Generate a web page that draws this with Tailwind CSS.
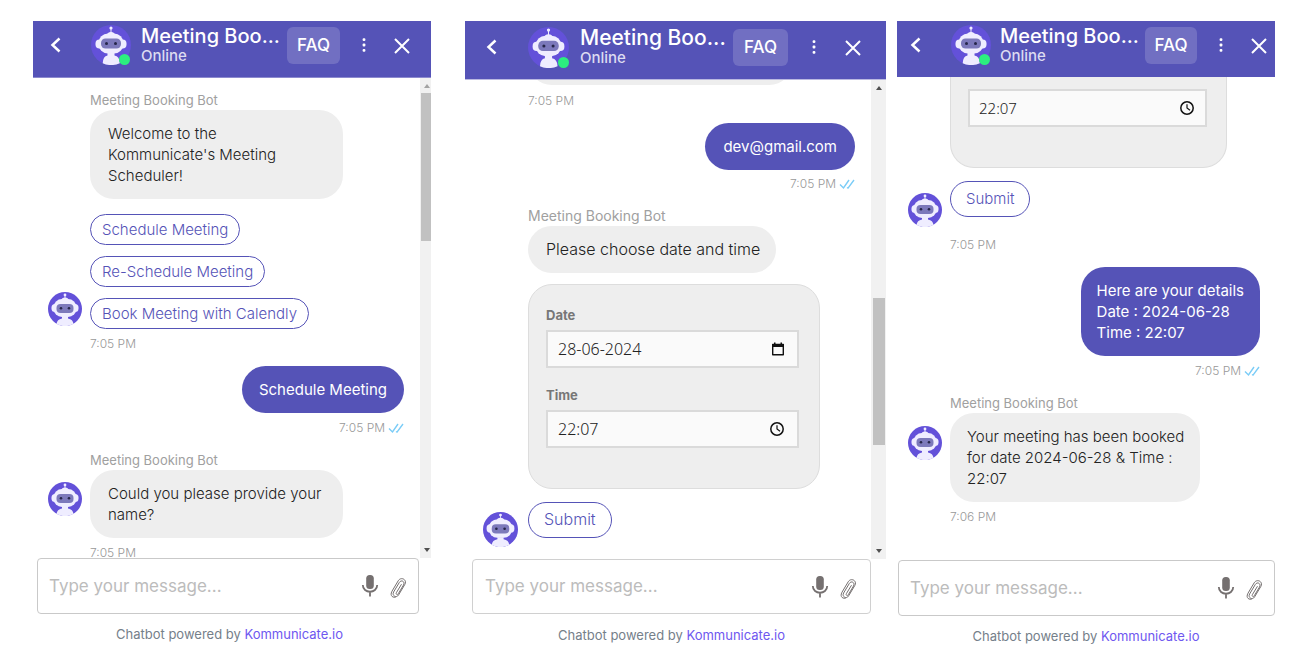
<!DOCTYPE html>
<html lang="en">
<head>
<meta charset="utf-8">
<meta name="viewport" content="width=device-width, initial-scale=1">
<title>Meeting Booking Bot</title>
<script src="https://cdn.jsdelivr.net/npm/@tailwindcss/browser@4"></script>
</head>
<body class="bg-white font-['Inter','Liberation_Sans',sans-serif] text-[15px] leading-[21px] font-light text-[#222222]">
<svg class="hidden" aria-hidden="true">
  <symbol id="bot" viewBox="0 0 40 40">
    <circle cx="20" cy="20" r="20" fill="#6351d9"/>
    <path d="M20 3v8" stroke="#efedff" stroke-width="1"/>
    <circle cx="20" cy="3" r="1.600" fill="#efedff"/>
    <path d="M16 10.500a4 3.500 0 0 1 8 0z" fill="#efedff"/>
    <rect x="4.500" y="14.500" width="31" height="9" rx="4" fill="#efedff"/>
    <rect x="7.500" y="8.500" width="25" height="20" rx="9.500" fill="#efedff"/>
    <rect x="10" y="13.500" width="20" height="10" rx="4.500" fill="#7c79bb"/>
    <circle cx="15.500" cy="18.500" r="1.500" fill="#26264a"/>
    <circle cx="24.500" cy="18.500" r="1.500" fill="#26264a"/>
    <path d="M16.500 28h7v2.500q5 .8 5.300 7.700Q20 42 11.700 38.200 12 31.300 16.500 30.500z" fill="#efedff"/>
  </symbol>
  <symbol id="botc" viewBox="0 0 34 34">
    <circle cx="17" cy="17" r="17" fill="#6351d9"/>
    <path d="M17 3v5" stroke="#efedff" stroke-width=".8"/>
    <circle cx="17" cy="3" r="1.400" fill="#efedff"/>
    <path d="M13.500 8a3.500 2.500 0 0 1 7 0z" fill="#efedff"/>
    <rect x="3.500" y="12" width="27" height="8" rx="3.500" fill="#efedff"/>
    <rect x="5.500" y="7" width="23" height="18" rx="8.500" fill="#efedff"/>
    <rect x="8.500" y="12" width="17" height="9" rx="4" fill="#7c79bb"/>
    <circle cx="13" cy="16.300" r="1.300" fill="#26264a"/>
    <circle cx="21" cy="16.300" r="1.300" fill="#26264a"/>
    <path d="M14 24.500h6v2q5 .8 5.500 5.500Q17 36.300 8.500 32q.5-4.700 5.500-5.500z" fill="#efedff"/>
  </symbol>
  <symbol id="back" viewBox="0 0 20 20"><path d="M13.500 3.500 6.500 10l7 6.500" fill="none" stroke="#fff" stroke-width="2.500"/></symbol>
  <symbol id="dots" viewBox="0 0 24 24"><g fill="#fff"><rect x="10.600" y="5.200" width="2.800" height="2.800" rx="1"/><rect x="10.600" y="10.600" width="2.800" height="2.800" rx="1"/><rect x="10.600" y="16" width="2.800" height="2.800" rx="1"/></g></symbol>
  <symbol id="close" viewBox="0 0 20 20"><path d="m3 3 14 14M17 3 3 17" stroke="#fff" stroke-width="2"/></symbol>
  <symbol id="ticks" viewBox="0 0 16 12"><path d="m1 6.500 3.500 3.500L10 2M8 9.500l1 .6L15 2" fill="none" stroke="#7accf7" stroke-width="1.400"/></symbol>
  <symbol id="mic" viewBox="0 0 18 24"><rect x="5.200" y="1" width="7.600" height="14" rx="3.500" fill="#757070"/><path d="M1.800 11c0 9 14.400 9 14.400 0M9 17.500V22.500" fill="none" stroke="#757070" stroke-width="1.800"/></symbol>
  <symbol id="clip" viewBox="0 0 18 20"><path d="M12.500 6.200 7.400 14.600c-1 1.600.9 2.700 1.900 1.100L14.500 7c1.900-3.400-2.200-5.800-4.200-2.500L4.600 14c-2 3.600 2.800 6.500 5 2.900L15.800 6.500c2.800-4.800-3.800-8.300-6.600-3.700L3 13.200c-2.700 5 1.500 7 4.200 5.600" fill="none" stroke="#757070" stroke-width="1"/></symbol>
  <symbol id="cal" viewBox="0 0 16 16"><path d="M2.700 3.500h10.600v10.300H2.700z" fill="none" stroke="#111" stroke-width="1.400" stroke-linejoin="round"/><path d="M2 3h12v3H2zM4 1.500h1.500V4H4zM10.500 1.500H12V4h-1.500z" fill="#111"/></symbol>
  <symbol id="clock" viewBox="0 0 16 16"><g fill="none" stroke="#111"><circle cx="8" cy="8" r="6.200" stroke-width="1.500"/><path d="M8 4.200V8l3 2.200" stroke-width="1.200"/></g></symbol>
</svg>

<div class="flex min-h-screen items-start pt-[21px] pr-[19px] pl-[33px]">

  <!-- First chat window -->
  <section class="mr-[34px] min-w-0 flex-[398_1_0%]">
    <header class="flex h-[57px] items-center border-b border-[#8c8ace] bg-[#5553b7] pr-[19px] pl-[13px] text-white">
      <button aria-label="Back" class="mr-[25px] -mt-2 shrink-0"><svg class="size-5"><use href="#back"/></svg></button>
      <div class="relative -mt-2 mr-2.5 shrink-0">
        <svg class="size-10"><use href="#bot"/></svg>
        <span class="absolute right-px bottom-0 size-[11px] rounded-full bg-[#2cee7f]"></span>
      </div>
      <div class="-mt-2 min-w-0 flex-1">
        <h2 class="text-[20px] leading-[22px] font-medium whitespace-nowrap">Meeting Boo...</h2>
        <p class="text-[15px] leading-[18px] font-medium text-[#dddcf1]">Online</p>
      </div>
      <button class="-mt-2 mr-3 h-[37px] w-[53px] shrink-0 rounded-md bg-[#716fc2] text-[17px] font-medium">FAQ</button>
      <button aria-label="Menu" class="-mt-2 mr-4 shrink-0"><svg class="size-6"><use href="#dots"/></svg></button>
      <button aria-label="Close" class="-mt-1.5 shrink-0"><svg class="size-5"><use href="#close"/></svg></button>
    </header>
    <div class="flex h-[480px]">
      <div class="flex min-w-0 flex-1 flex-col gap-3.5 overflow-hidden pt-3 pr-4 pl-[15px]">
        <article class="flex gap-2">
          <svg class="mb-[26px] size-[34px] shrink-0 self-end"><use href="#botc"/></svg>
          <div class="min-w-0 flex-1">
            <h3 class="text-[13px] leading-5 font-normal text-[#a0a0a0]">Meeting Booking Bot</h3>
            <p class="w-[253px] rounded-3xl bg-[#eeeeee] py-[13px] pr-10 pl-[18px]">Welcome to the Kommunicate's Meeting Scheduler!</p>
            <div class="mt-[15px] flex flex-col items-start gap-[11px] text-[#5553b7]">
              <button class="h-[31px] rounded-full border border-[#5553b7] px-[11px]">Schedule Meeting</button>
              <button class="h-[31px] rounded-full border border-[#5553b7] px-[11px]">Re-Schedule Meeting</button>
              <button class="h-[31px] rounded-full border border-[#5553b7] px-[11px]">Book Meeting with Calendly</button>
            </div>
            <time class="mt-[7px] block text-[12px] leading-4 text-[#999999]">7:05 PM</time>
          </div>
        </article>
        <article class="flex flex-col items-end">
          <p class="rounded-3xl bg-[#5553b7] px-[17px] py-[13px] font-normal text-white">Schedule Meeting</p>
          <div class="mt-[7px] flex items-center gap-[3px] text-[12px] leading-4 text-[#999999]"><time>7:05 PM</time><svg class="h-3 w-4"><use href="#ticks"/></svg></div>
        </article>
        <article class="flex gap-2">
          <svg class="mt-8 size-[34px] shrink-0"><use href="#botc"/></svg>
          <div class="min-w-0 flex-1">
            <h3 class="text-[13px] leading-5 font-normal text-[#a0a0a0]">Meeting Booking Bot</h3>
            <p class="w-[253px] rounded-3xl bg-[#eeeeee] py-[13px] pr-4 pl-[18px]">Could you please provide your name?</p>
            <time class="mt-[7px] block text-[12px] leading-4 text-[#999999]">7:05 PM</time>
          </div>
        </article>
      </div>
      <div aria-hidden="true" class="flex w-[11px] shrink-0 flex-col items-center bg-[#f1f1f1]">
        <svg class="h-[15px] w-[11px]" viewBox="0 0 11 15"><path d="m4 10 3-4 3 4z" fill="#a3a3a3"/></svg>
        <div class="h-[148px] w-full border-l border-[#f1f1f1] bg-[#c1c1c1]"></div>
        <svg class="mt-auto h-[15px] w-[11px]" viewBox="0 0 11 15"><path d="m4 5 3 4 3-4z" fill="#505050"/></svg>
      </div>
    </div>
    <form class="mr-3 ml-1 flex h-14 items-center rounded-[4px] border border-[#c9c9c9] bg-white pr-[11px] pl-[11px]">
      <input type="text" aria-label="Message" placeholder="Type your message..." class="min-w-0 flex-1 text-[17px] font-normal outline-none placeholder:text-[#bcbcbc]">
      <button type="button" aria-label="Record voice" class="mr-2.5"><svg class="h-6 w-[18px]"><use href="#mic"/></svg></button>
      <button type="button" aria-label="Attach file" class="mt-1"><svg class="h-5 w-[18px]"><use href="#clip"/></svg></button>
    </form>
    <footer class="mt-2.5 pr-[5px] text-center text-[13px] leading-5 font-normal text-[#75808a]">Chatbot powered by <a href="#" class="text-[#6e57f0]">Kommunicate.io</a></footer>
  </section>

  <!-- Second chat window -->
  <section class="mr-[11px] min-w-0 flex-[421_1_0%]">
    <header class="flex h-[59px] items-center border-b border-[#bab9e1] bg-[#5553b7] pr-[23px] pl-[17px] text-white">
      <button aria-label="Back" class="mr-[26px] -mt-1.5 shrink-0"><svg class="size-5"><use href="#back"/></svg></button>
      <div class="relative -mt-1.5 mr-[11px] shrink-0">
        <svg class="size-[41px]"><use href="#bot"/></svg>
        <span class="absolute right-0 bottom-0 size-[11px] rounded-full bg-[#2cee7f]"></span>
      </div>
      <div class="-mt-1.5 min-w-0 flex-1">
        <h2 class="text-[21px] leading-[22px] font-medium whitespace-nowrap">Meeting Boo...</h2>
        <p class="text-[15px] leading-[18px] font-medium text-[#dddcf1]">Online</p>
      </div>
      <button class="-mt-1.5 mr-3.5 h-[37px] w-[55px] shrink-0 rounded-md bg-[#716fc2] text-[17px] font-medium">FAQ</button>
      <button aria-label="Menu" class="-mt-1.5 mr-[17px] shrink-0"><svg class="size-6"><use href="#dots"/></svg></button>
      <button aria-label="Close" class="-mt-1 shrink-0"><svg class="size-5"><use href="#close"/></svg></button>
    </header>
    <div class="flex h-[479px]">
      <div class="flex min-w-0 flex-1 flex-col gap-3.5 overflow-hidden pr-4 pl-[18px] text-[16px]">
        <article class="ml-[45px]">
          <div class="flex h-[5px] w-[265px] items-end overflow-hidden"><div class="h-12 w-full shrink-0 rounded-3xl bg-[#eeeeee]"></div></div>
          <time class="mt-2 block text-[12px] leading-4 text-[#999999]">7:05 PM</time>
        </article>
        <article class="flex flex-col items-end">
          <p class="rounded-3xl bg-[#5553b7] px-[18px] py-[13px] text-[15px] font-normal text-white">dev@gmail.com</p>
          <div class="mt-1.5 flex items-center gap-[3px] text-[12px] leading-4 text-[#999999]"><time>7:05 PM</time><svg class="h-3 w-4"><use href="#ticks"/></svg></div>
        </article>
        <article class="flex gap-2.5">
          <svg class="mb-[11px] size-[35px] shrink-0 self-end"><use href="#botc"/></svg>
          <div class="min-w-0 flex-1">
            <h3 class="text-[14px] leading-5 font-normal text-[#a0a0a0]">Meeting Booking Bot</h3>
            <p class="w-fit rounded-3xl bg-[#eeeeee] px-4 pl-[18px] py-[13px]">Please choose date and time</p>
            <div class="mt-[11px] mr-[35px] rounded-3xl border border-[#dddddd] bg-[#eeeeee] pt-5 pr-5 pb-10 pl-[17px]">
              <label for="date2" class="block text-[13px] leading-5 font-bold text-[#777777]">Date</label>
              <div class="mt-[5px] flex h-[38px] items-center border-2 border-[#dadada] bg-[#fafafa] pr-[11px] pl-2.5">
                <input id="date2" type="text" value="28-06-2024" class="min-w-0 flex-1 font-['Noto_Sans',sans-serif] text-[16px] outline-none">
                <button type="button" aria-label="Pick a date"><svg class="size-4"><use href="#cal"/></svg></button>
              </div>
              <label for="time2" class="mt-[17px] block text-[13px] leading-5 font-bold text-[#777777]">Time</label>
              <div class="mt-[5px] flex h-[38px] items-center border-2 border-[#dadada] bg-[#fafafa] pr-3 pl-2.5">
                <input id="time2" type="text" value="22:07" class="min-w-0 flex-1 font-['Noto_Sans',sans-serif] text-[16px] outline-none">
                <button type="button" aria-label="Pick a time"><svg class="size-4"><use href="#clock"/></svg></button>
              </div>
            </div>
            <button class="mt-[13px] mb-5 h-9 rounded-full border border-[#5553b7] px-[15px] pb-0.5 text-[#5553b7]">Submit</button>
          </div>
        </article>
      </div>
      <div aria-hidden="true" class="flex w-[15px] shrink-0 flex-col items-center bg-[#f1f1f1]">
        <svg class="h-[15px] w-[15px]" viewBox="0 0 15 15"><path d="m5 10 3-4 3 4z" fill="#505050"/></svg>
        <div class="mt-[203px] h-[147px] w-3 bg-[#c1c1c1]"></div>
        <svg class="mt-auto h-[15px] w-[15px]" viewBox="0 0 15 15"><path d="m5 5 3 4 3-4z" fill="#505050"/></svg>
      </div>
    </div>
    <form class="mr-[15px] ml-[7px] flex h-[55px] items-center rounded-[4px] border border-[#d0d0d0] bg-white pr-[13px] pl-3">
      <input type="text" aria-label="Message" placeholder="Type your message..." class="min-w-0 flex-1 text-[17px] font-normal outline-none placeholder:text-[#bcbcbc]">
      <button type="button" aria-label="Record voice" class="mr-2.5"><svg class="h-6 w-[18px]"><use href="#mic"/></svg></button>
      <button type="button" aria-label="Attach file" class="mt-1"><svg class="h-5 w-[18px]"><use href="#clip"/></svg></button>
    </form>
    <footer class="mt-[11px] pr-2 text-center text-[13px] leading-5 font-normal text-[#75808a]">Chatbot powered by <a href="#" class="text-[#6e57f0]">Kommunicate.io</a></footer>
  </section>

  <!-- Third chat window -->
  <section class="min-w-0 flex-[378_1_0%]">
    <header class="flex h-[56px] items-center bg-[#5553b7] pr-1.5 pl-[9px] text-white">
      <button aria-label="Back" class="mr-[25px] -mt-2 shrink-0"><svg class="size-5"><use href="#back"/></svg></button>
      <div class="relative -mt-2 mr-[9px] shrink-0">
        <svg class="size-10"><use href="#bot"/></svg>
        <span class="absolute right-px bottom-0 size-[11px] rounded-full bg-[#2cee7f]"></span>
      </div>
      <div class="-mt-2 min-w-0 flex-1">
        <h2 class="text-[20px] leading-[22px] font-medium whitespace-nowrap">Meeting Boo...</h2>
        <p class="text-[15px] leading-[18px] font-medium text-[#dddcf1]">Online</p>
      </div>
      <button class="-mt-2 mr-3 h-[37px] w-[52px] shrink-0 rounded-md bg-[#716fc2] text-[17px] font-medium">FAQ</button>
      <button aria-label="Menu" class="-mt-2 mr-4 shrink-0"><svg class="size-6"><use href="#dots"/></svg></button>
      <button aria-label="Close" class="-mt-1.5 shrink-0"><svg class="size-5"><use href="#close"/></svg></button>
    </header>
    <div class="flex h-[483px] flex-col gap-3.5 overflow-hidden pr-[15px] pl-[11px]">
      <article class="flex gap-2">
        <svg class="mt-[116px] size-[34px] shrink-0"><use href="#botc"/></svg>
        <div class="min-w-0 flex-1">
          <div class="mr-[33px] rounded-b-3xl border border-t-0 border-[#dddddd] bg-[#eeeeee] pt-3 pr-[19px] pb-10 pl-[17px]">
            <div class="flex h-[38px] items-center border-2 border-[#dadada] bg-[#fafafa] pr-2.5 pl-[9px]">
              <input aria-label="Time" type="text" value="22:07" class="min-w-0 flex-1 font-['Noto_Sans',sans-serif] text-[15px] outline-none">
              <button type="button" aria-label="Pick a time"><svg class="size-4"><use href="#clock"/></svg></button>
            </div>
          </div>
          <button class="mt-[13px] h-9 rounded-full border border-[#5553b7] px-[15px] pb-0.5 text-[#5553b7]">Submit</button>
          <time class="mt-5 block text-[12px] leading-4 text-[#999999]">7:05 PM</time>
        </div>
      </article>
      <article class="flex flex-col items-end">
        <p class="rounded-3xl bg-[#5553b7] px-4 py-[13px] font-normal text-white">Here are your details<br>Date : 2024-06-28<br>Time : 22:07</p>
        <div class="mt-[7px] flex items-center gap-[3px] text-[12px] leading-4 text-[#999999]"><time>7:05 PM</time><svg class="h-3 w-4"><use href="#ticks"/></svg></div>
      </article>
      <article class="flex gap-2">
        <svg class="mt-[33px] size-[34px] shrink-0"><use href="#botc"/></svg>
        <div class="min-w-0 flex-1">
          <h3 class="text-[13px] leading-5 font-normal text-[#a0a0a0]">Meeting Booking Bot</h3>
          <p class="w-[250px] rounded-3xl bg-[#eeeeee] py-[13px] pr-2.5 pl-[17px]">Your meeting has been booked for date 2024-06-28 &amp; Time : 22:07</p>
          <time class="mt-[7px] block text-[12px] leading-4 text-[#999999]">7:06 PM</time>
        </div>
      </article>
    </div>
    <form class="ml-px flex h-14 items-center rounded-[4px] border border-[#c9c9c9] bg-white pr-[11px] pl-[11px]">
      <input type="text" aria-label="Message" placeholder="Type your message..." class="min-w-0 flex-1 text-[17px] font-normal outline-none placeholder:text-[#bcbcbc]">
      <button type="button" aria-label="Record voice" class="mr-2.5"><svg class="h-6 w-[18px]"><use href="#mic"/></svg></button>
      <button type="button" aria-label="Attach file" class="mt-1"><svg class="h-5 w-[18px]"><use href="#clip"/></svg></button>
    </form>
    <footer class="mt-2.5 text-center text-[13px] leading-5 font-normal text-[#75808a]">Chatbot powered by <a href="#" class="text-[#6e57f0]">Kommunicate.io</a></footer>
  </section>
</div>
</body>
</html>
